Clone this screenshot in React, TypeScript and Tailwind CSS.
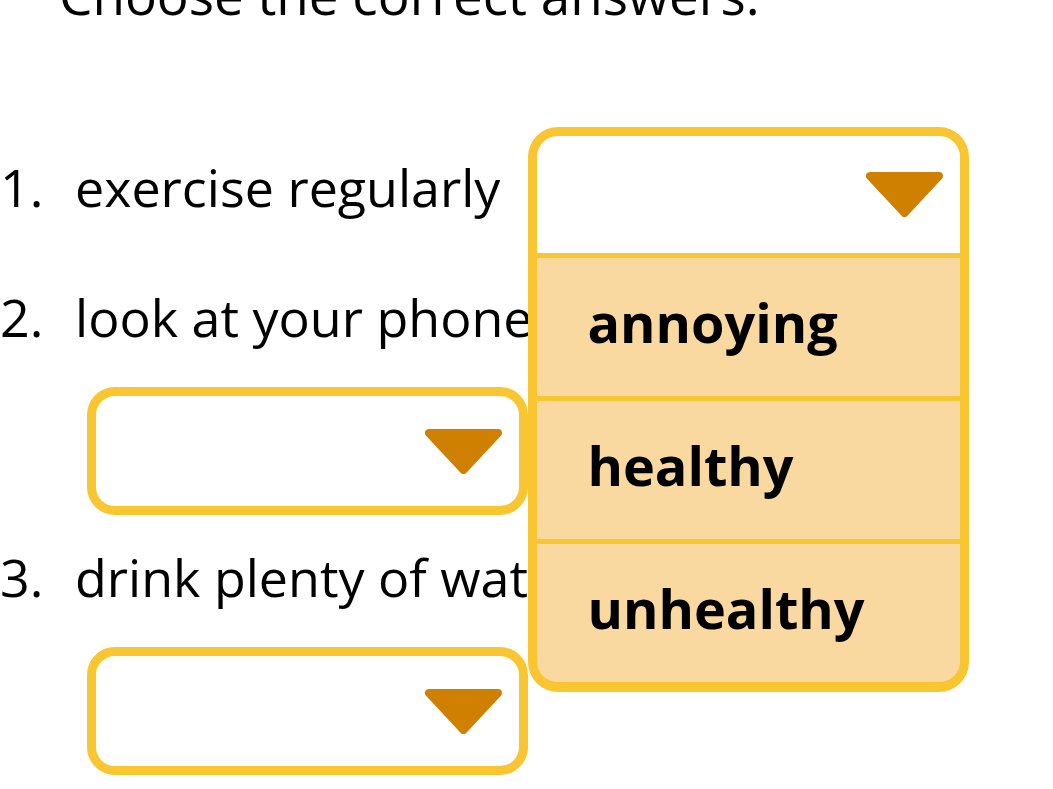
import React from 'react';

const FONT = { fontFamily: '"Open Sans", "Noto Sans", sans-serif' };

function Arrow() {
    return (
        <svg width="77" height="45" viewBox="0 0 77 45" className="block">
            <polygon points="4,4 73,4 38.5,41" fill="#cf8000" stroke="#cf8000" strokeWidth="8" strokeLinejoin="round" />
        </svg>
    );
}

function ClosedSelect() {
    return (
        <div className="ml-[12px] flex h-[128px] w-[441px] items-center justify-end rounded-[28px] border-[9px] border-[#f9c531] bg-white pr-[17px]">
            <Arrow />
        </div>
    );
}

function OpenSelect({ options }: { options: string[] }) {
    return (
        <div className="relative ml-[12px] h-[128px] w-[441px]">
            <div className="absolute left-0 top-0 z-10 w-[441px] overflow-hidden rounded-[30px] border-[9px] border-b-[10px] border-[#f9c531] bg-[#f9d9a0]">
                <div className="flex h-[117px] items-center justify-end bg-white pr-[17px]">
                    <Arrow />
                </div>
                {options.map((o) => (
                    <div key={o} className="flex h-[143px] items-center border-t-[5px] border-[#f9c531] pb-[11px] pl-[50px] text-[54px] font-bold leading-[60px] text-black">
                        {o}
                    </div>
                ))}
            </div>
        </div>
    );
}

function Item({ n, text, open }: { n: number; text: string; open?: boolean }) {
    return (
        <div className="flex items-baseline">
            <div className="w-[75px] shrink-0 pb-[8px] leading-[60px]">{n}.</div>
            <div className="flex flex-1 flex-wrap items-center gap-x-[16px] gap-y-[32px]">
                <span className="whitespace-nowrap pb-[8px] leading-[60px]">{text}</span>
                {open ? <OpenSelect options={['annoying', 'healthy', 'unhealthy']} /> : <ClosedSelect />}
            </div>
        </div>
    );
}

export default function App() {
    return (
        <div className="h-[789px] w-[1053px] overflow-hidden bg-white text-[52px] text-black" style={FONT}>
            <div className="mt-[-35px] pl-[59px] text-[53px] leading-[60px]">Choose the correct answers.</div>
            <div className="mt-[102px] flex flex-col gap-y-[32px] pr-[70px]">
                <Item n={1} text="exercise regularly" open />
                <Item n={2} text="look at your phone" />
                <Item n={3} text="drink plenty of water" />
            </div>
        </div>
    );
}
